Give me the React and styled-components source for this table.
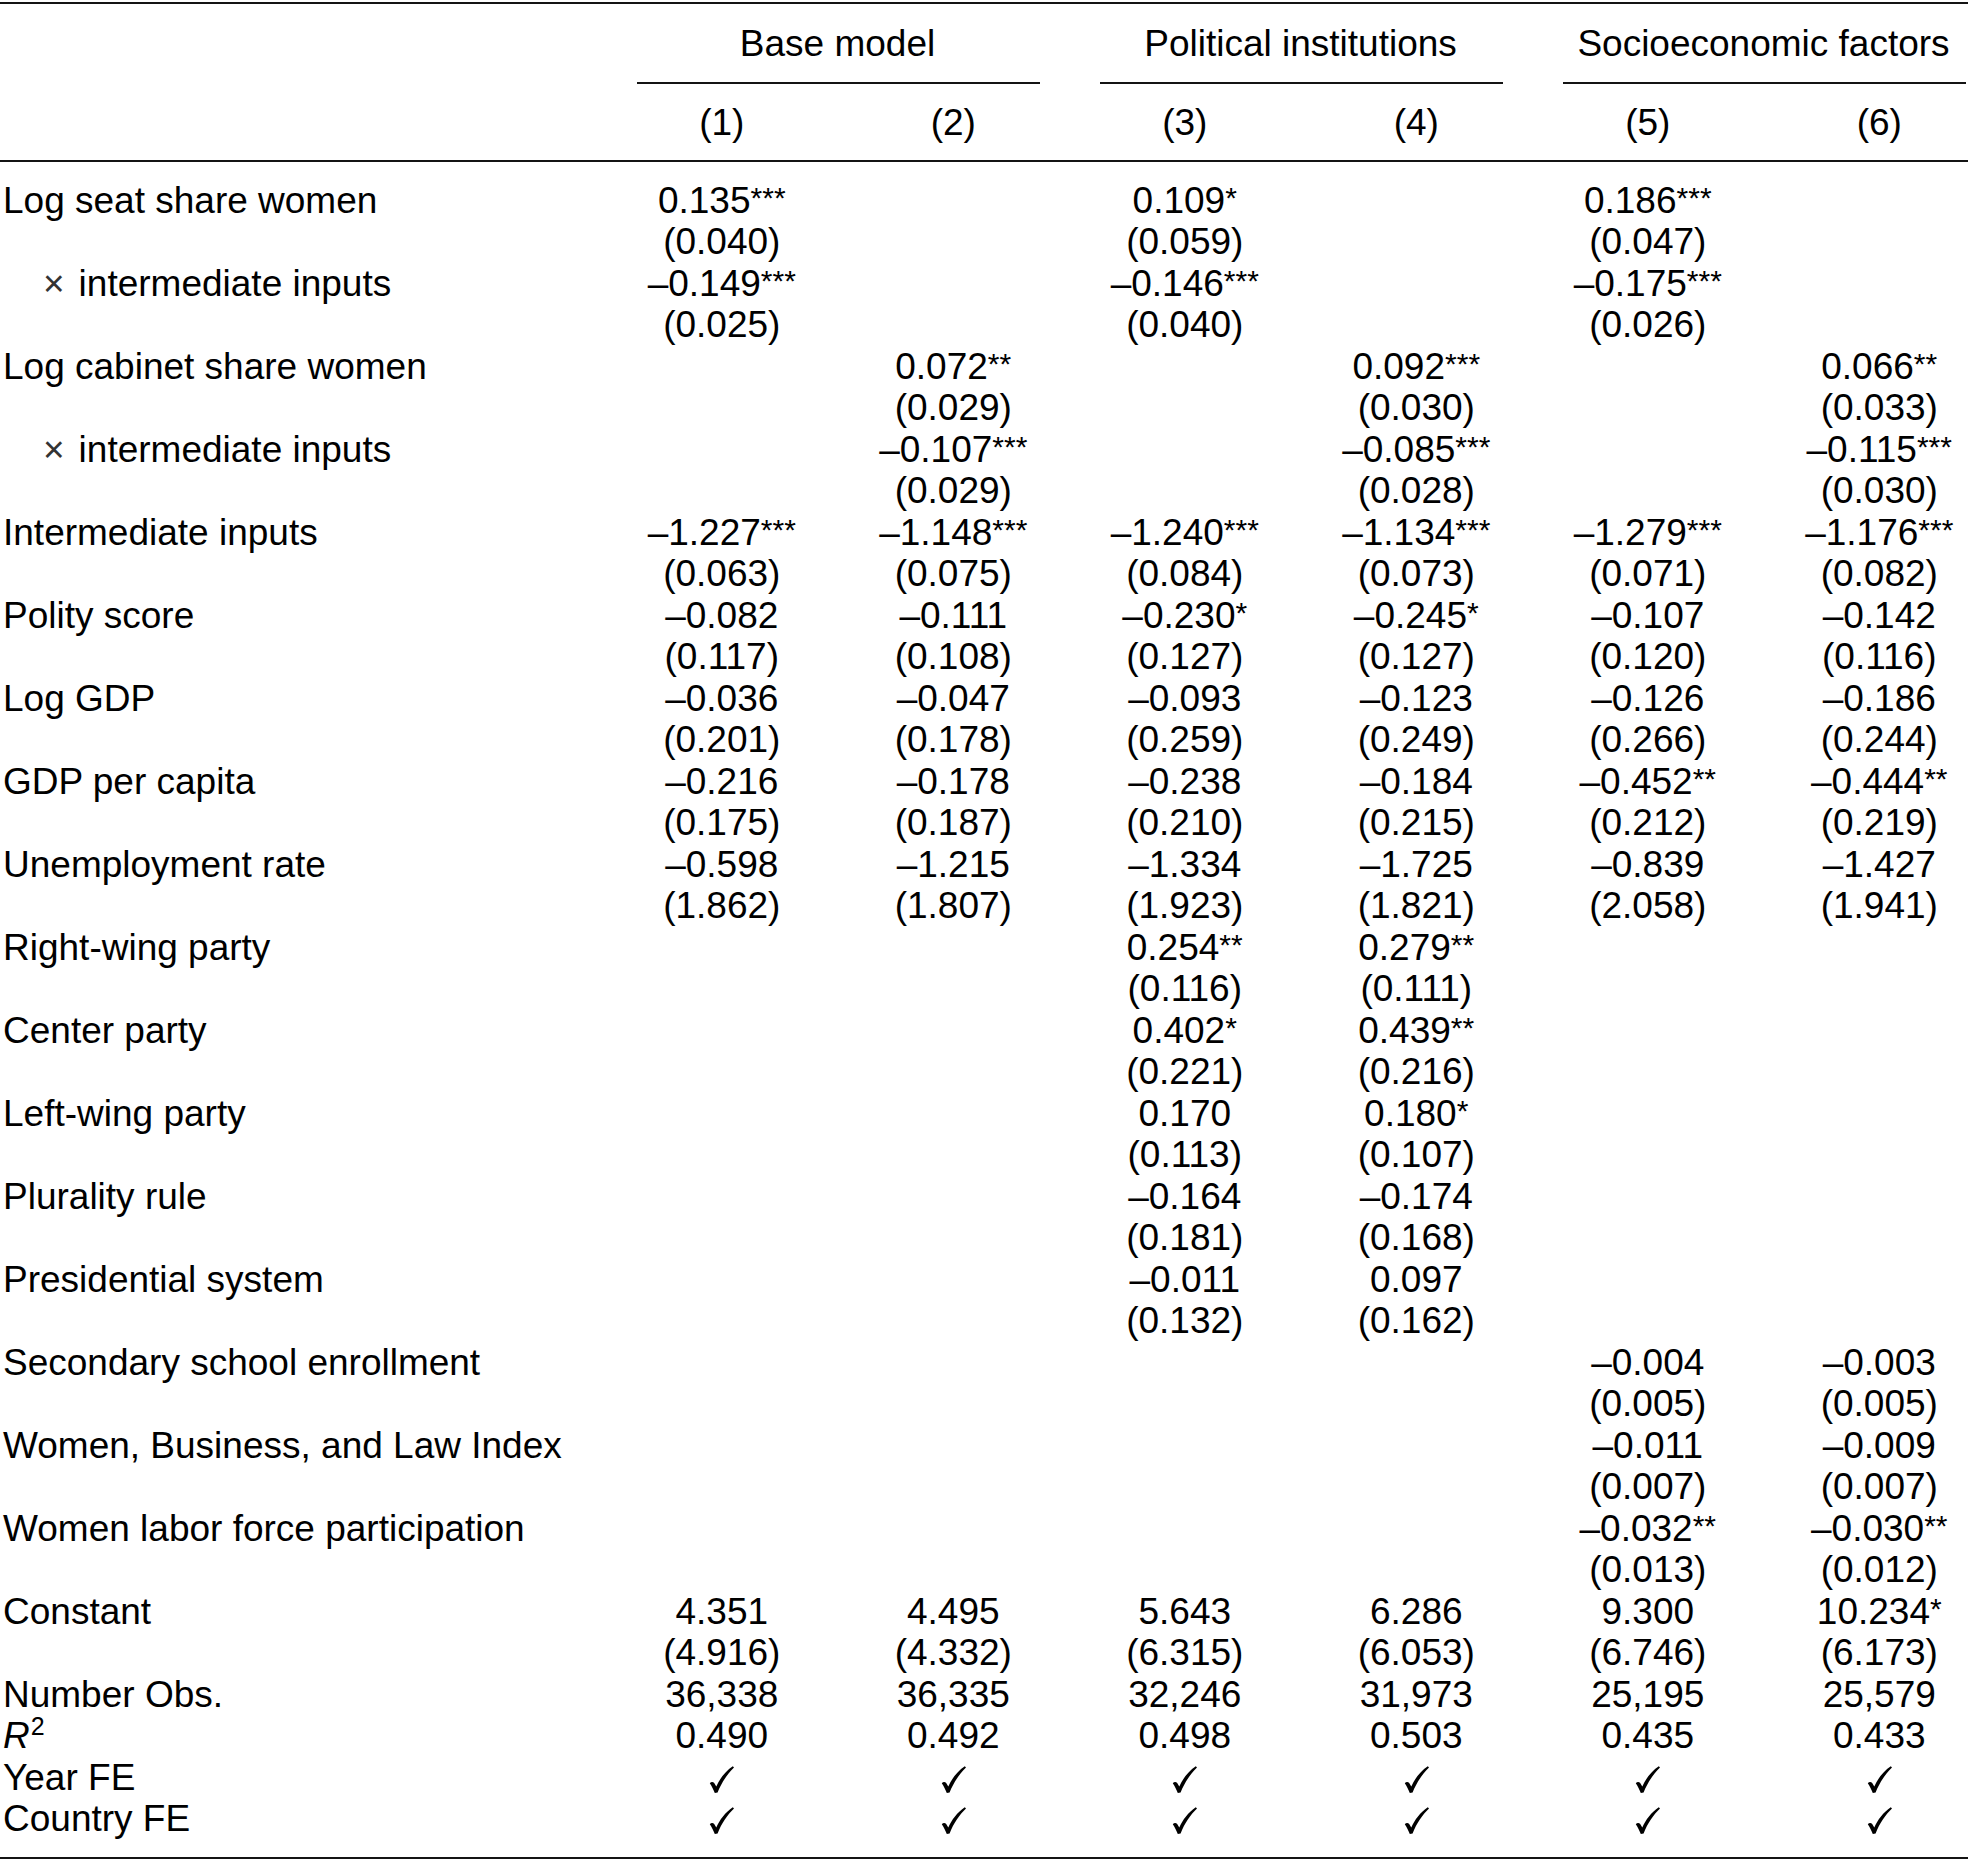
import React from 'react';
import styled, { createGlobalStyle } from 'styled-components';

const GlobalStyle = createGlobalStyle`
  html, body {
    margin: 0;
    padding: 0;
    background: #fff;
  }
  body {
    font-family: "Liberation Sans", Arial, Helvetica, sans-serif;
    color: #000;
  }
`;

const LINE = 41.5;
const COLS = '606px repeat(6, 231.5px)';

const Sheet = styled.div` /* whole table, full page width */
  width: 1968px;
  overflow: hidden;
  font-size: 37px;
  line-height: ${LINE}px;
`;

const Rule = styled.div` /* toprule / midrule / bottomrule */
  height: ${(p) => p.$h || 2}px;
  background: #141414;
  margin-top: ${(p) => p.$top || 0}px;
`;

const GroupRow = styled.div` /* Base model / Political institutions / ... */
  display: grid;
  grid-template-columns: 606px repeat(3, 463px);
  margin-top: ${(p) => p.$top || 0}px;
`;

const GroupTitle = styled.div`
  text-align: center;
  white-space: nowrap;
`;

const CmidRule = styled.div` /* short line under each group */
  height: 2px;
  background: #141414;
  margin: 0 29px 0 31px;
`;

const Row = styled.div`
  display: grid;
  grid-template-columns: ${COLS};
  margin-top: ${(p) => p.$top || 0}px;
`;

const Body = styled.div`
  margin-top: 17.5px;
`;

const Label = styled.div`
  white-space: nowrap;
  height: ${LINE}px;
  padding-left: ${(p) => (p.$indent ? 43 : 3)}px;
`;

const Times = styled.span` /* math times sign */
  display: inline-block;
  margin-right: 14px;
  font-weight: 300;
  color: #333;
`;

const Cell = styled.div`
  text-align: center;
  white-space: nowrap;
  height: ${(p) => (p.$double ? LINE * 2 : LINE)}px;
`;

const Line = styled.div`
  height: ${LINE}px;
`;

const Italic = styled.span`
  font-style: italic;
`;

const Stars = styled.span` /* significance stars, a bit smaller than the digits */
  font-size: 30px;
  position: relative;
  top: -5px;
`;

const Square = styled.sup`
  font-size: 25px;
  line-height: 0;
  vertical-align: 0;
  position: relative;
  top: -13px;
  margin-left: 1px;
`;

const CheckSvg = styled.svg`
  width: 25px;
  height: 27px;
  vertical-align: -3px;
`;

function Check() {
  return (
    <CheckSvg viewBox="0 0 25 27">
      <path
        d="M0.8 17.2 C2 15.6 4 15.4 5.2 17 L7.3 20.6 C10.5 13 16.5 5 23.8 0.2 L25 1.6 C18.5 7.8 12.6 16.5 8.6 26.4 L5.8 27 C4.4 23.4 2.8 20.2 0.8 17.2 Z"
        fill="#000"
      />
    </CheckSvg>
  );
}

const rows = [
  { label: 'Log seat share women', cells: [['0.135***', '(0.040)'], null, ['0.109*', '(0.059)'], null, ['0.186***', '(0.047)'], null] },
  { label: 'intermediate inputs', indent: true, cells: [['–0.149***', '(0.025)'], null, ['–0.146***', '(0.040)'], null, ['–0.175***', '(0.026)'], null] },
  { label: 'Log cabinet share women', cells: [null, ['0.072**', '(0.029)'], null, ['0.092***', '(0.030)'], null, ['0.066**', '(0.033)']] },
  { label: 'intermediate inputs', indent: true, cells: [null, ['–0.107***', '(0.029)'], null, ['–0.085***', '(0.028)'], null, ['–0.115***', '(0.030)']] },
  { label: 'Intermediate inputs', cells: [['–1.227***', '(0.063)'], ['–1.148***', '(0.075)'], ['–1.240***', '(0.084)'], ['–1.134***', '(0.073)'], ['–1.279***', '(0.071)'], ['–1.176***', '(0.082)']] },
  { label: 'Polity score', cells: [['–0.082', '(0.117)'], ['–0.111', '(0.108)'], ['–0.230*', '(0.127)'], ['–0.245*', '(0.127)'], ['–0.107', '(0.120)'], ['–0.142', '(0.116)']] },
  { label: 'Log GDP', cells: [['–0.036', '(0.201)'], ['–0.047', '(0.178)'], ['–0.093', '(0.259)'], ['–0.123', '(0.249)'], ['–0.126', '(0.266)'], ['–0.186', '(0.244)']] },
  { label: 'GDP per capita', cells: [['–0.216', '(0.175)'], ['–0.178', '(0.187)'], ['–0.238', '(0.210)'], ['–0.184', '(0.215)'], ['–0.452**', '(0.212)'], ['–0.444**', '(0.219)']] },
  { label: 'Unemployment rate', cells: [['–0.598', '(1.862)'], ['–1.215', '(1.807)'], ['–1.334', '(1.923)'], ['–1.725', '(1.821)'], ['–0.839', '(2.058)'], ['–1.427', '(1.941)']] },
  { label: 'Right-wing party', cells: [null, null, ['0.254**', '(0.116)'], ['0.279**', '(0.111)'], null, null] },
  { label: 'Center party', cells: [null, null, ['0.402*', '(0.221)'], ['0.439**', '(0.216)'], null, null] },
  { label: 'Left-wing party', cells: [null, null, ['0.170', '(0.113)'], ['0.180*', '(0.107)'], null, null] },
  { label: 'Plurality rule', cells: [null, null, ['–0.164', '(0.181)'], ['–0.174', '(0.168)'], null, null] },
  { label: 'Presidential system', cells: [null, null, ['–0.011', '(0.132)'], ['0.097', '(0.162)'], null, null] },
  { label: 'Secondary school enrollment', cells: [null, null, null, null, ['–0.004', '(0.005)'], ['–0.003', '(0.005)']] },
  { label: 'Women, Business, and Law Index', cells: [null, null, null, null, ['–0.011', '(0.007)'], ['–0.009', '(0.007)']] },
  { label: 'Women labor force participation', cells: [null, null, null, null, ['–0.032**', '(0.013)'], ['–0.030**', '(0.012)']] },
  { label: 'Constant', cells: [['4.351', '(4.916)'], ['4.495', '(4.332)'], ['5.643', '(6.315)'], ['6.286', '(6.053)'], ['9.300', '(6.746)'], ['10.234*', '(6.173)']] },
];

const obs = ['36,338', '36,335', '32,246', '31,973', '25,195', '25,579'];
const r2 = ['0.490', '0.492', '0.498', '0.503', '0.435', '0.433'];

// split "0.135***" into number and stars
function Coef({ text }) {
  const m = text.match(/^(.*?)(\*+)$/);
  if (!m) return text;
  return (
    <>
      {m[1]}
      <Stars>{m[2]}</Stars>
    </>
  );
}

export default function App() {
  return (
    <Sheet>
      <GlobalStyle />
      <Rule $top={2} />

      <GroupRow $top={19}>
        <div />
        <GroupTitle>Base model</GroupTitle>
        <GroupTitle>Political institutions</GroupTitle>
        <GroupTitle>Socioeconomic factors</GroupTitle>
      </GroupRow>

      <GroupRow $top={17.5}>
        <div />
        <CmidRule />
        <CmidRule />
        <CmidRule />
      </GroupRow>

      <Row $top={18}>
        <div />
        {[1, 2, 3, 4, 5, 6].map((n) => (
          <Cell key={n}>({n})</Cell>
        ))}
      </Row>

      <Rule $top={16.5} />

      <Body>
        {rows.map((r, i) => (
          <Row key={i}>
            <Label $indent={r.indent}>
              {r.indent && <Times>×</Times>}
              {r.label}
            </Label>
            {r.cells.map((c, j) => (
              <Cell key={j} $double>
                <Line>{c && <Coef text={c[0]} />}</Line>
                <Line>{c && c[1]}</Line>
              </Cell>
            ))}
          </Row>
        ))}

        <Row>
          <Label>Number Obs.</Label>
          {obs.map((v, j) => (
            <Cell key={j}>{v}</Cell>
          ))}
        </Row>
        <Row>
          <Label>
            <Italic>R</Italic>
            <Square>2</Square>
          </Label>
          {r2.map((v, j) => (
            <Cell key={j}>{v}</Cell>
          ))}
        </Row>
        <Row>
          <Label>Year FE</Label>
          {obs.map((v, j) => (
            <Cell key={j}>
              <Check />
            </Cell>
          ))}
        </Row>
        <Row>
          <Label>Country FE</Label>
          {obs.map((v, j) => (
            <Cell key={j}>
              <Check />
            </Cell>
          ))}
        </Row>
      </Body>

      <Rule $top={17} />
    </Sheet>
  );
}
